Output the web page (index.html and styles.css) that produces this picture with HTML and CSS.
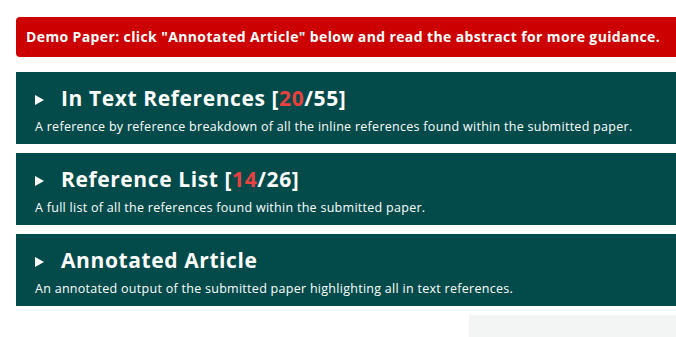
FILE: index.html
```html
<!DOCTYPE html>
<html lang="en">
  <head>
    <meta charset="UTF-8" />
    <meta name="viewport" content="width=device-width, initial-scale=1.0" />
    <title>Reference Report</title>
    <link rel="stylesheet" href="styles.css">
  </head>
  <body>
    <div class="page">
      <div class="demo-banner">
        Demo Paper: click "Annotated Article" below and read the abstract for more guidance.
      </div>

      <div class="section">
        <div class="section-title">
          <span class="arrow"></span>
          <h2>In Text References <span class="count">[<span class="found">20</span>/55]</span></h2>
        </div>
        <p class="section-desc">A reference by reference breakdown of all the inline references found within the submitted paper.</p>
      </div>

      <div class="section">
        <div class="section-title">
          <span class="arrow"></span>
          <h2>Reference List <span class="count">[<span class="found">14</span>/26]</span></h2>
        </div>
        <p class="section-desc">A full list of all the references found within the submitted paper.</p>
      </div>

      <div class="section">
        <div class="section-title">
          <span class="arrow"></span>
          <h2>Annotated Article</h2>
        </div>
        <p class="section-desc">An annotated output of the submitted paper highlighting all in text references.</p>
      </div>

      <div class="footer-box"></div>
    </div>
  </body>
</html>
```

FILE: styles.css
```css
html,
body {
  margin: 0;
  overflow: hidden;
  background-color: #fff;
}
body {
  font-family: "Open Sans", "Liberation Sans", sans-serif;
}
.page {
  padding: 17px 0 0 16px;
  margin-right: -24px;
}
.demo-banner {
  background-color: #cc0000;
  color: #fff;
  font-weight: 700;
  font-size: 14px;
  letter-spacing: 0.38px;
  padding: 0 10px;
  height: 40px;
  line-height: 40px;
  border-radius: 4px;
  margin-bottom: 15px;
  white-space: nowrap;
}
.section {
  background-color: #024b4a;
  color: #fff;
  height: 72px;
  box-sizing: border-box;
  padding: 13px 19px 0;
  margin-bottom: 9px;
}
.section-title {
  display: flex;
  align-items: center;
  gap: 17px;
}
.arrow {
  width: 0;
  height: 0;
  border-top: 5px solid transparent;
  border-bottom: 5px solid transparent;
  border-left: 9px solid #fff;
  margin-top: 4px;
}
.section-title h2 {
  margin: 0;
  font-size: 21px;
  font-weight: 700;
  letter-spacing: 0.6px;
  line-height: 26px;
  white-space: nowrap;
}
.found {
  color: #e8413f;
}
.section-desc {
  margin: 8px 0 0;
  font-size: 12.5px;
  letter-spacing: 0.28px;
  line-height: 16px;
  white-space: nowrap;
}
.footer-box {
  margin-left: 453px;
  height: 30px;
  background-color: #f3f4f4;
}
```
